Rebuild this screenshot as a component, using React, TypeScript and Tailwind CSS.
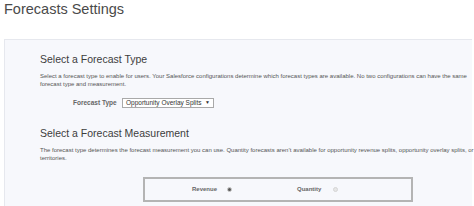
export default function App() {
  return (
    <div className="w-[474px] h-[206px] overflow-hidden bg-white font-['Liberation_Sans',Arial,sans-serif] text-[#444]">
      <h1 className="pl-[4px] pt-[1px] text-[14.5px] leading-[17px] text-[#4a4a4a]">Forecasts Settings</h1>

      <div className="mt-[21px] ml-[4px] w-[468px] h-[200px] border-t border-l border-[#e6e8ee] bg-[#f7f8fc] pl-[35px] pt-[13px]">
        <h2 className="text-[10.5px] leading-[13px] text-[#3d3d3d]">Select a Forecast Type</h2>
        <p className="mt-[6px] pr-[4px] text-[6px] leading-[8px] text-[#555]">
          Select a forecast type to enable for users. Your Salesforce configurations determine which forecast types are available. No two configurations can have the same forecast type and measurement.
        </p>

        <div className="mt-[10px] flex items-center">
          <label className="ml-[33px] w-[49px] text-[6.5px] font-bold text-[#666]">Forecast Type</label>
          <div className="flex h-[10px] w-[92px] items-center justify-between border border-[#a9a9a9] bg-white px-[3px] text-[6.5px] text-[#333]">
            <span>Opportunity Overlay Splits</span>
            <span className="text-[5px]">▼</span>
          </div>
        </div>

        <h2 className="mt-[19px] text-[10.5px] leading-[13px] text-[#3d3d3d]">Select a Forecast Measurement</h2>
        <p className="mt-[6px] mr-[-12px] text-[6px] leading-[8px] text-[#555]">
          The forecast type determines the forecast measurement you can use. Quantity forecasts aren’t available for opportunity revenue splits, opportunity overlay splits, or territories.
        </p>

        <div className="mt-[15px] ml-[103px] flex h-[25px] w-[270px] items-center border-2 border-[#b4b4b4] text-[6px] font-bold text-[#666]">
          <div className="ml-[47px] flex items-center">
            <span>Revenue</span>
            <span className="ml-[10px] flex h-[5px] w-[5px] items-center justify-center rounded-full border border-[#bbb] bg-[#e8e8e8]">
              <span className="h-[2.5px] w-[2.5px] rounded-full bg-[#555]" />
            </span>
          </div>
          <div className="ml-[65px] flex items-center">
            <span>Quantity</span>
            <span className="ml-[12px] h-[5px] w-[5px] rounded-full border border-[#d5d5d5] bg-[#e6e6e6]" />
          </div>
        </div>
      </div>
    </div>
  );
}
